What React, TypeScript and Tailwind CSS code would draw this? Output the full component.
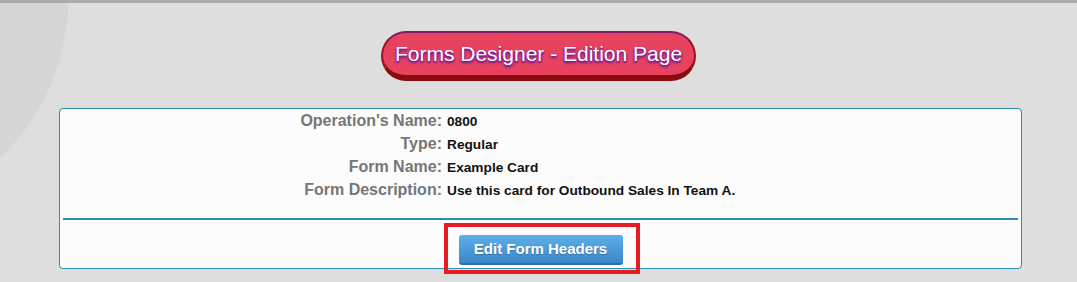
const rows = [
  { label: "Operation's Name:", value: "0800" },
  { label: "Type:", value: "Regular" },
  { label: "Form Name:", value: "Example Card" },
  { label: "Form Description:", value: "Use this card for Outbound Sales In Team A." },
];

export default function App() {
  return (
    <div className="relative w-[1077px] h-[282px] overflow-hidden bg-[#dddedd] font-['Liberation_Sans',Arial,sans-serif]">
      {/* background decoration */}
      <div className="absolute left-[-368px] top-[-218px] w-[436px] h-[436px] rounded-full bg-[#d5d6d5]" />

      <div className="relative">
        <div className="h-[3px] bg-[#ababab]" />

        {/* title */}
        <div className="flex justify-center pt-[28px]">
          <div className="flex h-[50px] w-[315px] items-center justify-center rounded-full border-2 border-t-[#7a2060] border-x-[#9a1420] border-b-[6px] border-b-[#8a0c10] bg-[#e8435e] text-[21px] text-white [text-shadow:0_2px_3px_#5c10a0,0_1px_2px_#6a1aa8]">
            Forms Designer - Edition Page
          </div>
        </div>

        {/* card */}
        <div className="mx-[59px] mt-[27px] w-[963px] rounded-[4px] border border-[#2b8fb2] bg-[#fcfcfc] pb-[3px]">
          <div className="flex flex-col">
            {rows.map((r) => (
              <div key={r.label} className="flex h-[23px] items-baseline">
                <div className="w-[382px] text-right text-[16px] font-bold leading-[23px] text-[#767676]">{r.label}</div>
                <div className="pl-[5px] text-[13.7px] font-bold leading-[23px] text-[#111]">{r.value}</div>
              </div>
            ))}
          </div>

          <div className="mx-[3px] mt-[17px] h-[2px] bg-[#2b8fb2]" />

          <div className="flex justify-center pt-[15px]">
            <div className="relative">
              <button className="h-[30px] w-[164px] rounded-[3px] border-b-2 border-[#2d6ea6] bg-gradient-to-b from-[#5cb0e8] to-[#3d86c8] text-[15px] font-bold text-white [text-shadow:0_1px_1px_rgba(0,0,0,0.25)]">
                Edit Form Headers
              </button>
              <div className="absolute left-[-15px] right-[-17px] top-[-12px] bottom-[-9px] border-4 border-[#e41d24]" />
            </div>
          </div>
        </div>
      </div>
    </div>
  );
}
